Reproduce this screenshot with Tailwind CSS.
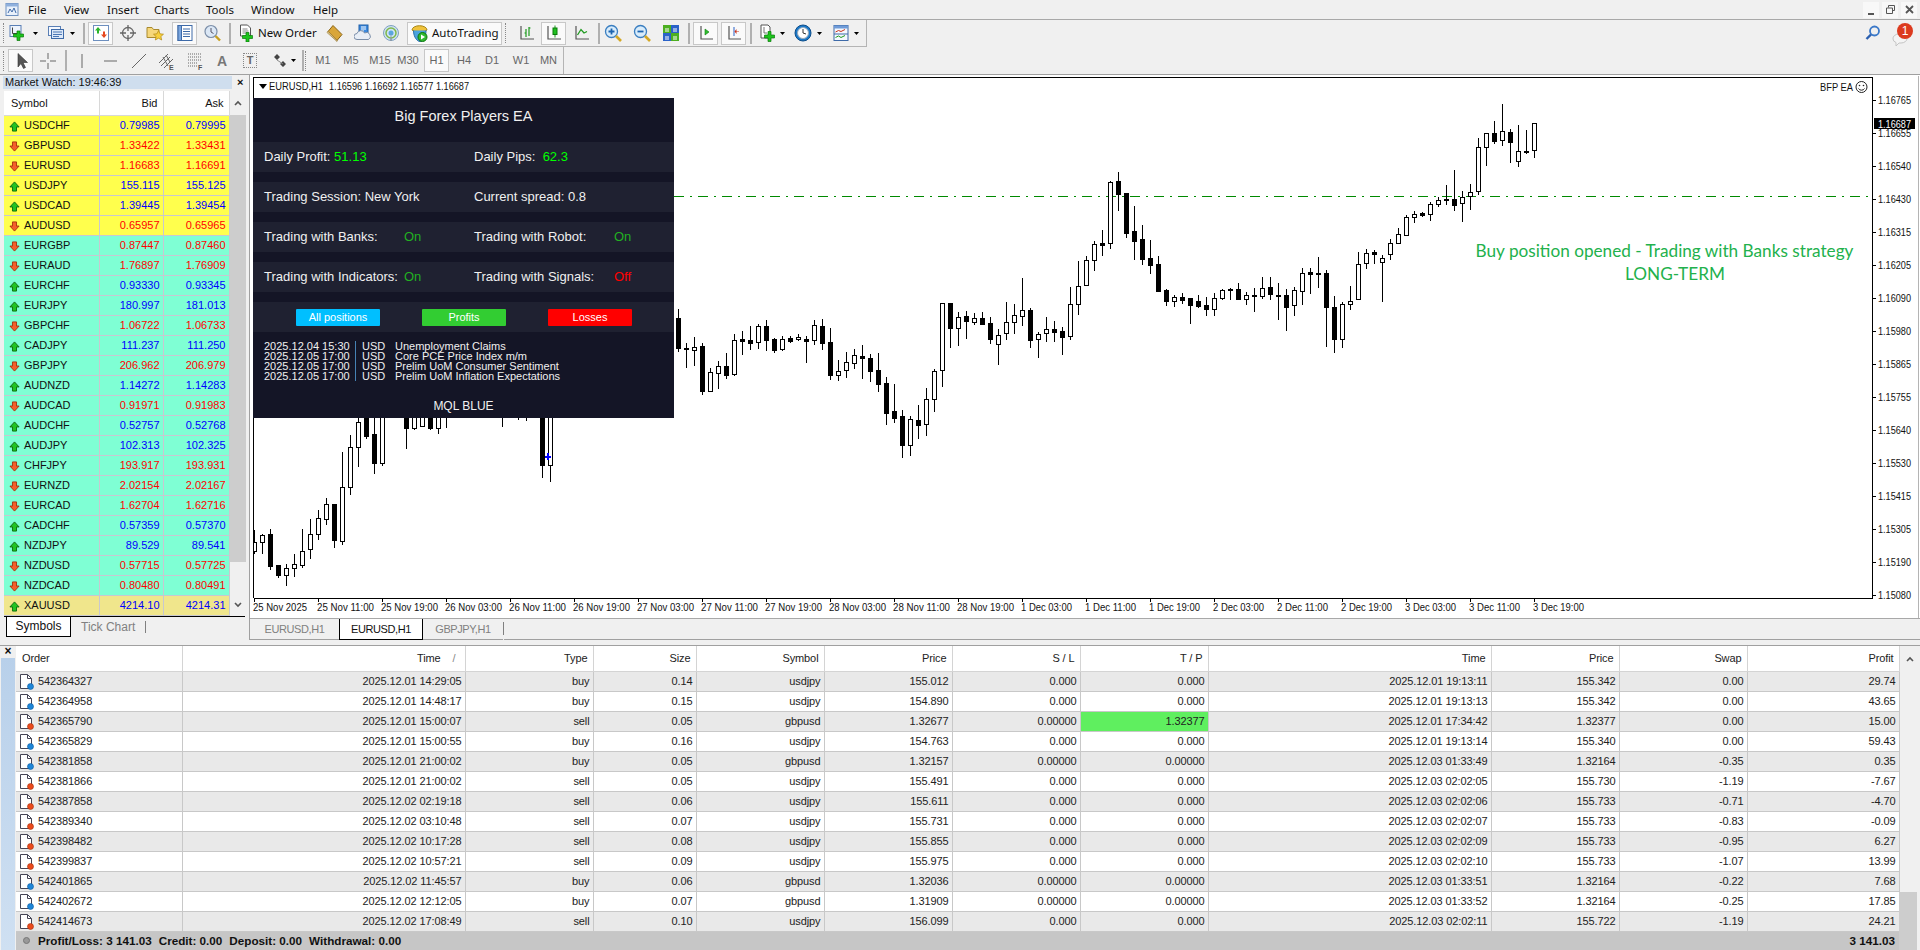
<!DOCTYPE html>
<html lang="en">
<head>
<meta charset="utf-8">
<title>MetaTrader</title>
<script src="https://cdn.jsdelivr.net/npm/@tailwindcss/browser@4"></script>
</head>
<body>
<svg class="hidden" width="0" height="0">
  <defs>
    <symbol id="dd" viewBox="0 0 5 3"><path d="M0 0h5L2.500 3z" fill="#000"/></symbol>
    <symbol id="up" viewBox="0 0 12 12"><path d="M6 1l5 5.500H8.200V11H3.800V6.500H1z" fill="#22c322" stroke="#0b6b0b"/></symbol>
    <symbol id="down" viewBox="0 0 12 12"><path d="M6 11L1 5.500h2.800V1h4.400v4.500H11z" fill="#f4602a" stroke="#a8300c"/></symbol>
    <symbol id="docb" viewBox="0 0 15 16"><path d="M1.500.5h7l4 4v10h-11z" fill="#fff" stroke="#445"/><path d="M8.500.5v4h4" fill="none" stroke="#445"/><circle cx="11.500" cy="12.500" r="3" fill="#1f86d8" stroke="#0b5aa0" stroke-width=".6"/></symbol>
    <symbol id="docr" viewBox="0 0 15 16"><path d="M1.500.5h7l4 4v10h-11z" fill="#fff" stroke="#445"/><path d="M8.500.5v4h4" fill="none" stroke="#445"/><circle cx="11.500" cy="12.500" r="3" fill="#ea4a1c" stroke="#a8300c" stroke-width=".6"/></symbol>
  </defs>
</svg>

<div class="w-[1920px] h-[950px] overflow-hidden flex flex-col bg-[#f0f0f0] text-[#111] font-['Liberation_Sans',sans-serif] text-[11px]">

  <!-- Menu -->
  <div class="h-[20px] shrink-0 flex items-center border-b border-[#a8a8a8] font-['Noto_Sans',sans-serif] text-[11.5px] relative">
    <svg class="ml-[5px] w-[15px] h-[16px]" viewBox="0 0 15 16"><rect x="1" y="1.500" width="12" height="12" fill="#e8f0fb" stroke="#6d8fbf"/><rect x="1" y="1.500" width="12" height="3" fill="#8fb0dd"/><path d="M3 11l2-4 2 3 2-4 2 5" fill="none" stroke="#3f6aa8"/></svg>
    <span class="ml-[8px] w-[36px]">File</span>
    <span class="w-[43px]">View</span>
    <span class="w-[47px]">Insert</span>
    <span class="w-[52px]">Charts</span>
    <span class="w-[45px]">Tools</span>
    <span class="w-[62px]">Window</span>
    <span>Help</span>
    <div class="ml-auto mr-[3px] flex gap-[3px]">
      <div class="w-[16px] h-[16px] bg-[#f8f8f8] flex items-end justify-center pb-[3px]"><div class="w-[6px] h-[2px] bg-[#555]"></div></div>
      <div class="w-[16px] h-[16px] bg-[#f8f8f8] flex items-center justify-center"><svg class="w-[9px] h-[9px]" viewBox="0 0 9 9"><path d="M2.500 2.500V.5h6v5h-2M.5 3h6v5.500h-6z" fill="none" stroke="#555"/></svg></div>
      <div class="w-[16px] h-[16px] bg-[#f8f8f8] flex items-center justify-center"><svg class="w-[9px] h-[9px]" viewBox="0 0 9 9"><path d="M1 1l7 7M8 1L1 8" stroke="#555" stroke-width="1.800"/></svg></div>
    </div>
  </div>

  <!-- Toolbar 1 -->
  <div class="h-[27px] shrink-0 relative">
    <div class="w-[867px] h-full flex items-center border-b border-r border-[#b4b4b4] font-['Noto_Sans',sans-serif] text-[11.5px]">
      <div class="ml-[3px] w-[2px] h-[20px] border-l border-dotted border-[#888]"></div>
      <svg class="ml-[4px] w-[18px] h-[18px]" viewBox="0 0 18 18"><rect x="1" y="1.500" width="11" height="11" fill="#eef4fc" stroke="#5a7fb5"/><path d="M3.500 3.500v6h6" fill="none" stroke="#444"/><path d="M8 7h3v3h3.500v3H11v3.500H8V13H4.500v-3H8z" fill="#1dc41d" stroke="#0a7a0a" stroke-width=".7"/></svg>
      <svg class="ml-[6px] w-[5px] h-[3px]"><use href="#dd"/></svg>
      <svg class="ml-[9px] w-[18px] h-[18px]" viewBox="0 0 18 18"><rect x="1.500" y="2.500" width="12" height="9" fill="#f4f8ff" stroke="#5a7fb5"/><rect x="4.500" y="5.500" width="12" height="9" fill="#dce8f8" stroke="#3e6aa8"/><path d="M6 8h9M6 10.500h9M6 12.500h6" stroke="#4a76b4"/></svg>
      <svg class="ml-[5px] w-[5px] h-[3px]"><use href="#dd"/></svg>
      <div class="ml-[8px] w-[2px] h-[21px] bg-[#b0b0b0]"></div>
      <div class="ml-[3px] w-[25px] h-[23px] border border-[#c8c8c8] bg-[#fafafa] flex items-center justify-center">
        <svg class="w-[18px] h-[18px]" viewBox="0 0 18 18"><rect x="1.500" y="1.500" width="15" height="15" fill="#fff" stroke="#6d8fbf"/><path d="M6 3l3 3.500H7v3H5v-3H3z" fill="#2ab52a"/><path d="M12 14l-3-3.500h2v-3h2v3h2z" fill="#e5481f"/></svg>
      </div>
      <svg class="ml-[6px] w-[18px] h-[18px]" viewBox="0 0 18 18"><circle cx="9" cy="9" r="5.500" fill="none" stroke="#666" stroke-width="1.300"/><path d="M9 1v6M9 11v6M1 9h6M11 9h6" stroke="#666" stroke-width="1.300"/></svg>
      <svg class="ml-[9px] w-[18px] h-[18px]" viewBox="0 0 18 18"><path d="M1 3.500h5l1.500 2H13v8H1z" fill="#f6d77a" stroke="#a98a2e"/><path d="M12.500 6.500l1.500 3.300 3.500.4-2.600 2.300.8 3.500-3.200-1.800-3.200 1.800.8-3.500-2.600-2.300 3.500-.4z" fill="#f7cf3d" stroke="#b28a14" stroke-width=".7"/></svg>
      <div class="ml-[8px] w-[25px] h-[23px] border border-[#c8c8c8] bg-[#fafafa] flex items-center justify-center">
        <svg class="w-[18px] h-[18px]" viewBox="0 0 18 18"><rect x="2" y="1.500" width="14" height="15" fill="#fff" stroke="#3e6aa8"/><rect x="2" y="1.500" width="3.500" height="15" fill="#7ba6de" stroke="#3e6aa8"/><path d="M7 5h7M7 7.500h7M7 10h7M7 12.500h7" stroke="#3e6aa8"/></svg>
      </div>
      <svg class="ml-[6px] w-[18px] h-[18px]" viewBox="0 0 18 18"><circle cx="8" cy="7.500" r="6" fill="#dbe7f5" stroke="#7b8ea8" stroke-width="1.200"/><path d="M8 4v4l2.500 1.500" fill="none" stroke="#556"/><path d="M12.500 12l4.500 4.500" stroke="#c8a020" stroke-width="2.400"/></svg>
      <div class="ml-[8px] w-[2px] h-[21px] bg-[#b0b0b0]"></div>
      <svg class="ml-[7px] w-[18px] h-[18px]" viewBox="0 0 18 18"><path d="M2.500 1h7l3 3v8h-10z" fill="#fff" stroke="#555"/><path d="M4.500 5h5M4.500 7h6M4.500 9h6" stroke="#888"/><path d="M8 8.500h3v3h3.500v3H11V18H8v-3.500H4.500v-3H8z" fill="#1dc41d" stroke="#0a7a0a" stroke-width=".7"/></svg>
      <span class="ml-[2px] w-[57px] whitespace-nowrap leading-none">New Order</span>
      <svg class="ml-[11px] w-[18px] h-[18px]" viewBox="0 0 18 18"><path d="M7 1.500l9 9-5 6-9-9z" fill="#d9a63a" stroke="#8a6515"/><path d="M2 7.500l9 9 0 1-10-9z" fill="#f2e2b0" stroke="#8a6515" stroke-width=".6"/></svg>
      <svg class="ml-[10px] w-[18px] h-[18px]" viewBox="0 0 18 18"><rect x="5" y="1" width="9" height="9" fill="#3d8be0" stroke="#1c5ea8"/><path d="M7 3h5M7 5h5M7 7h3" stroke="#fff"/><path d="M3 15.500a3 3 0 010-6 4 4 0 017.500-.5 3.500 3.500 0 014 6.500z" fill="#e8eef6" stroke="#7b8ea8"/></svg>
      <svg class="ml-[10px] w-[18px] h-[18px]" viewBox="0 0 18 18"><circle cx="9" cy="9" r="7.500" fill="#cfe3f4" stroke="#7fa0bf"/><circle cx="9" cy="9" r="5" fill="none" stroke="#7fb84a" stroke-width="1.500"/><circle cx="9" cy="9" r="2.500" fill="#58a6e0"/><path d="M9 9l-1 8h2z" fill="#8a9aaa"/></svg>
      <div class="ml-[7px] w-[95px] h-[23px] border border-[#c8c8c8] bg-[#fafafa] flex items-center">
        <svg class="ml-[2px] w-[19px] h-[19px]" viewBox="0 0 19 19"><path d="M2 6a7 4 0 0115 0c-1 2-14 2-15 0z" fill="#f0c33c" stroke="#a68414"/><path d="M3.500 6.500c0 7 4 11 6.500 11 3 0 6-4 6-11" fill="#4aa3dd" stroke="#2a6fa8"/><circle cx="12.500" cy="13" r="4.500" fill="#30b830" stroke="#0c760c"/><path d="M11 10.500l4 2.500-4 2.500z" fill="#fff"/></svg>
        <span class="ml-[3px] whitespace-nowrap leading-none">AutoTrading</span>
      </div>
      <div class="ml-[3px] w-[2px] h-[20px] border-l border-dotted border-[#888]"></div>
      <svg class="ml-[11px] w-[18px] h-[18px]" viewBox="0 0 18 18"><path d="M3 2v13h13" fill="none" stroke="#555" stroke-width="1.200"/><path d="M8 5v8M6.500 9H8M11 3v9M11 4h1.500" stroke="#1f9a1f" stroke-width="1.200"/></svg>
      <div class="ml-[5px] w-[25px] h-[23px] border border-[#c8c8c8] bg-[#fafafa] flex items-center justify-center">
        <svg class="w-[18px] h-[18px]" viewBox="0 0 18 18"><path d="M3 2v13h13" fill="none" stroke="#555" stroke-width="1.200"/><path d="M10 1.500v12" stroke="#1f9a1f"/><rect x="8" y="4" width="4" height="6.500" fill="#1fc01f" stroke="#0a7a0a"/></svg>
      </div>
      <svg class="ml-[7px] w-[18px] h-[18px]" viewBox="0 0 18 18"><path d="M3 2v13h13" fill="none" stroke="#555" stroke-width="1.200"/><path d="M4.500 11L8 5.500 11 9l3-1.500" fill="none" stroke="#1f9a1f" stroke-width="1.300"/></svg>
      <div class="ml-[7px] w-[2px] h-[21px] bg-[#b0b0b0]"></div>
      <svg class="ml-[4px] w-[18px] h-[18px]" viewBox="0 0 18 18"><circle cx="7.500" cy="7.500" r="6" fill="#d8ecfb" stroke="#3a7ec0" stroke-width="1.300"/><path d="M4.500 7.500h6M7.500 4.500v6" stroke="#1c64b0" stroke-width="1.800"/><path d="M12 12l5 5" stroke="#d4a824" stroke-width="2.600"/></svg>
      <svg class="ml-[11px] w-[18px] h-[18px]" viewBox="0 0 18 18"><circle cx="7.500" cy="7.500" r="6" fill="#d8ecfb" stroke="#3a7ec0" stroke-width="1.300"/><path d="M4.500 7.500h6" stroke="#1c64b0" stroke-width="1.800"/><path d="M12 12l5 5" stroke="#d4a824" stroke-width="2.600"/></svg>
      <svg class="ml-[11px] w-[18px] h-[18px]" viewBox="0 0 18 18"><rect x="1" y="1" width="8" height="8" fill="#4caf20"/><rect x="9" y="1" width="8" height="8" fill="#2a62c8"/><rect x="1" y="9" width="8" height="8" fill="#2a62c8"/><rect x="9" y="9" width="8" height="8" fill="#4caf20"/><path d="M3 5h4M3 7h4M11 5h4M11 7h4M3 13h4M3 15h4M11 13h4M11 15h4" stroke="#fff"/></svg>
      <div class="ml-[8px] w-[2px] h-[21px] bg-[#b0b0b0]"></div>
      <div class="ml-[3px] w-[25px] h-[23px] border border-[#c8c8c8] bg-[#fafafa] flex items-center justify-center">
        <svg class="w-[18px] h-[18px]" viewBox="0 0 18 18"><path d="M4 2v13h12" fill="none" stroke="#555" stroke-width="1.200"/><path d="M8 5v6l4-3z" fill="#2fc02f" stroke="#0a7a0a" stroke-width=".6"/></svg>
      </div>
      <div class="ml-[3px] w-[25px] h-[23px] border border-[#c8c8c8] bg-[#fafafa] flex items-center justify-center">
        <svg class="w-[18px] h-[18px]" viewBox="0 0 18 18"><path d="M4 2v13h12" fill="none" stroke="#555" stroke-width="1.200"/><path d="M9 3v9" stroke="#2a62c8"/><path d="M14 7.500h-2.500V5L9.500 7.500l2 2.500V8H14z" fill="#c8321c"/></svg>
      </div>
      <div class="ml-[4px] w-[2px] h-[21px] bg-[#b0b0b0]"></div>
      <svg class="ml-[7px] w-[18px] h-[18px]" viewBox="0 0 18 18"><path d="M2 1h7l2 2v11H2z" fill="#fff" stroke="#555"/><path d="M5 3v6h3" fill="none" stroke="#777"/><path d="M9 7.500h3v3.500h3.500v3H12v3.500H9V14H5.500v-3H9z" fill="#1dc41d" stroke="#0a7a0a" stroke-width=".7"/></svg>
      <svg class="ml-[3px] w-[5px] h-[3px]"><use href="#dd"/></svg>
      <svg class="ml-[9px] w-[18px] h-[18px]" viewBox="0 0 18 18"><circle cx="9" cy="9" r="8" fill="#1c79c8" stroke="#0c4d8a"/><circle cx="9" cy="9" r="5.500" fill="#fff" stroke="#9ab"/><path d="M9 5v4l3 1" fill="none" stroke="#333"/></svg>
      <svg class="ml-[5px] w-[5px] h-[3px]"><use href="#dd"/></svg>
      <svg class="ml-[10px] w-[18px] h-[18px]" viewBox="0 0 18 18"><rect x="2" y="1.500" width="14" height="15" fill="#f4f8ff" stroke="#3e6aa8"/><rect x="2" y="1.500" width="14" height="3" fill="#6f9bd8"/><path d="M2 10h14" stroke="#3e6aa8"/><path d="M3.500 8l3-1.500 2.500 1 4-2" fill="none" stroke="#c8321c"/><path d="M3.500 13.500l3-1.500 2.500 1.500 4-2" fill="none" stroke="#1f9a1f"/></svg>
      <svg class="ml-[4px] w-[5px] h-[3px]"><use href="#dd"/></svg>
    </div>
    <svg class="absolute left-[1865px] top-[4px] w-[16px] h-[18px]" viewBox="0 0 16 18"><circle cx="9.500" cy="7" r="4.500" fill="none" stroke="#3a78c8" stroke-width="1.800"/><path d="M6 10.500l-4.500 4.500" stroke="#2a5fb0" stroke-width="2.400"/></svg>
    <div class="absolute left-[1891px] top-[4px] w-[24px] h-[24px]">
      <svg class="w-[24px] h-[24px]" viewBox="0 0 24 24"><path d="M2 15a6 4.500 0 016-5h2a6 4.500 0 010 9H8l-3 3v-3.500A5 4 0 012 15z" fill="#f4f4f4" stroke="#c4c4c4"/></svg>
      <div class="absolute left-[6px] top-[-1px] w-[16px] h-[16px] rounded-full bg-[#dc3a1e] text-white text-[12px] leading-[16px] text-center">1</div>
    </div>
  </div>

  <!-- Toolbar 2 -->
  <div class="h-[27px] shrink-0">
    <div class="w-[564px] h-full flex items-center border-r border-[#b4b4b4] text-[#666]">
      <div class="ml-[3px] w-[2px] h-[20px] border-l border-dotted border-[#888]"></div>
      <div class="ml-[3px] w-[25px] h-[23px] border border-[#c8c8c8] bg-[#fafafa] flex items-center justify-center">
        <svg class="w-[18px] h-[18px]" viewBox="0 0 18 18"><path d="M6 1.500V15l3-3.500 2.500 5 2-1-2.500-5h4.500z" fill="#555" stroke="#333" stroke-width=".6"/></svg>
      </div>
      <svg class="ml-[6px] w-[18px] h-[18px]" viewBox="0 0 18 18"><path d="M9 1v6M9 11v6M1 9h6M11 9h6" stroke="#666"/></svg>
      <div class="ml-[8px] w-[2px] h-[21px] bg-[#b0b0b0]"></div>
      <svg class="ml-[6px] w-[18px] h-[18px]" viewBox="0 0 18 18"><path d="M9 2v14" stroke="#666"/></svg>
      <svg class="ml-[11px] w-[18px] h-[18px]" viewBox="0 0 18 18"><path d="M2 9h13" stroke="#666"/></svg>
      <svg class="ml-[10px] w-[18px] h-[18px]" viewBox="0 0 18 18"><path d="M2 16L16 2" stroke="#666"/></svg>
      <svg class="ml-[10px] w-[18px] h-[18px]" viewBox="0 0 18 18"><path d="M1 11l9-9M3 14l9-9M6 16l9-9M5 5l5 9M8 3l4 7" stroke="#666"/><text x="11" y="18" font-size="7" font-weight="700" fill="#555">E</text></svg>
      <svg class="ml-[11px] w-[18px] h-[18px]" viewBox="0 0 18 18"><path d="M1 2h13M1 5h13M1 8h13M1 11h9M1 14h9" stroke="#666" stroke-dasharray="1 1"/><text x="11" y="18" font-size="7" font-weight="700" fill="#555">F</text></svg>
      <span class="ml-[8px] w-[18px] text-center text-[14px] font-bold leading-none text-[#777]">A</span>
      <div class="ml-[12px] w-[14px] h-[15px] border border-dotted border-[#888] flex items-center justify-center text-[11px] font-bold leading-none text-[#666]">T</div>
      <svg class="ml-[14px] w-[18px] h-[18px]" viewBox="0 0 18 18"><path d="M3 5l3-3 3 3-3 3zM9 12l3-3 3 3-3 3z" fill="#444"/><path d="M6 8l6 4" stroke="#888"/></svg>
      <svg class="ml-[2px] w-[5px] h-[3px]"><use href="#dd"/></svg>
      <div class="ml-[6px] w-[2px] h-[21px] bg-[#b0b0b0]"></div>
      <div class="ml-[1px] w-[2px] h-[20px] border-l border-dotted border-[#888]"></div>
      <span class="ml-[2px] w-[28px] text-center">M1</span>
      <span class="w-[28px] text-center">M5</span>
      <span class="ml-[1px] w-[28px] text-center">M15</span>
      <span class="w-[28px] text-center">M30</span>
      <div class="ml-[2px] w-[25px] h-[23px] border border-[#c8c8c8] bg-[#fafafa] flex items-center justify-center">H1</div>
      <span class="ml-[1px] w-[28px] text-center">H4</span>
      <span class="w-[28px] text-center">D1</span>
      <span class="ml-[1px] w-[28px] text-center">W1</span>
      <span class="w-[27px] text-center">MN</span>
    </div>
  </div>

  <!-- Main -->
  <div class="h-[566px] shrink-0 flex border-t border-[#a0a0a0]">
    <!-- Market Watch -->
    <div class="w-[250px] shrink-0 border-r border-[#a0a0a0] pt-[1px] pl-[3px] flex flex-col">
      <div class="flex items-center h-[13px]">
        <div class="w-[229px] h-[13px] bg-[#cfdeee] pl-[2px] leading-[13px] text-[11px]">Market Watch: 19:46:39</div>
        <span class="ml-[5px] font-bold text-[11px] leading-none">×</span>
      </div>
      <div class="mt-[2px] ml-[1px] flex">
        <table class="w-[225px] table-fixed bg-white [&_th]:font-normal [&_th]:h-[24px] [&_th]:border-r [&_th]:border-b [&_th]:border-[#d8d8d8] [&_th]:text-right [&_th]:pr-[5px] [&_th:first-child]:text-left [&_th:first-child]:pl-[7px] [&_td]:h-[20px] [&_td]:p-0 [&_td]:pr-[3px] [&_td]:border-r [&_td]:border-b [&_td]:border-[#c8c8d0] [&_td]:text-right [&_td:first-child]:text-left [&_td:first-child]:pl-[20px] [&_td:first-child]:relative [&_td:first-child]:text-[#111]">
          <colgroup><col class="w-[95px]"><col class="w-[64px]"><col class="w-[66px]"></colgroup>
          <thead><tr><th>Symbol</th><th>Bid</th><th>Ask</th></tr></thead>
          <tbody>
            <tr class="bg-[#ffff4d] text-[#0000ff]"><td><svg class="absolute left-[5px] top-[5px] w-[11px] h-[11px]"><use href="#up"/></svg>USDCHF</td><td>0.79985</td><td>0.79995</td></tr>
            <tr class="bg-[#ffff4d] text-[#ff0000]"><td><svg class="absolute left-[5px] top-[5px] w-[11px] h-[11px]"><use href="#down"/></svg>GBPUSD</td><td>1.33422</td><td>1.33431</td></tr>
            <tr class="bg-[#ffff4d] text-[#ff0000]"><td><svg class="absolute left-[5px] top-[5px] w-[11px] h-[11px]"><use href="#down"/></svg>EURUSD</td><td>1.16683</td><td>1.16691</td></tr>
            <tr class="bg-[#ffff4d] text-[#0000ff]"><td><svg class="absolute left-[5px] top-[5px] w-[11px] h-[11px]"><use href="#up"/></svg>USDJPY</td><td>155.115</td><td>155.125</td></tr>
            <tr class="bg-[#ffff4d] text-[#0000ff]"><td><svg class="absolute left-[5px] top-[5px] w-[11px] h-[11px]"><use href="#up"/></svg>USDCAD</td><td>1.39445</td><td>1.39454</td></tr>
            <tr class="bg-[#ffff4d] text-[#ff0000]"><td><svg class="absolute left-[5px] top-[5px] w-[11px] h-[11px]"><use href="#down"/></svg>AUDUSD</td><td>0.65957</td><td>0.65965</td></tr>
            <tr class="bg-[#7fffd4] text-[#ff0000]"><td><svg class="absolute left-[5px] top-[5px] w-[11px] h-[11px]"><use href="#down"/></svg>EURGBP</td><td>0.87447</td><td>0.87460</td></tr>
            <tr class="bg-[#7fffd4] text-[#ff0000]"><td><svg class="absolute left-[5px] top-[5px] w-[11px] h-[11px]"><use href="#down"/></svg>EURAUD</td><td>1.76897</td><td>1.76909</td></tr>
            <tr class="bg-[#7fffd4] text-[#0000ff]"><td><svg class="absolute left-[5px] top-[5px] w-[11px] h-[11px]"><use href="#up"/></svg>EURCHF</td><td>0.93330</td><td>0.93345</td></tr>
            <tr class="bg-[#7fffd4] text-[#0000ff]"><td><svg class="absolute left-[5px] top-[5px] w-[11px] h-[11px]"><use href="#up"/></svg>EURJPY</td><td>180.997</td><td>181.013</td></tr>
            <tr class="bg-[#7fffd4] text-[#ff0000]"><td><svg class="absolute left-[5px] top-[5px] w-[11px] h-[11px]"><use href="#down"/></svg>GBPCHF</td><td>1.06722</td><td>1.06733</td></tr>
            <tr class="bg-[#7fffd4] text-[#0000ff]"><td><svg class="absolute left-[5px] top-[5px] w-[11px] h-[11px]"><use href="#up"/></svg>CADJPY</td><td>111.237</td><td>111.250</td></tr>
            <tr class="bg-[#7fffd4] text-[#ff0000]"><td><svg class="absolute left-[5px] top-[5px] w-[11px] h-[11px]"><use href="#down"/></svg>GBPJPY</td><td>206.962</td><td>206.979</td></tr>
            <tr class="bg-[#7fffd4] text-[#0000ff]"><td><svg class="absolute left-[5px] top-[5px] w-[11px] h-[11px]"><use href="#up"/></svg>AUDNZD</td><td>1.14272</td><td>1.14283</td></tr>
            <tr class="bg-[#7fffd4] text-[#ff0000]"><td><svg class="absolute left-[5px] top-[5px] w-[11px] h-[11px]"><use href="#down"/></svg>AUDCAD</td><td>0.91971</td><td>0.91983</td></tr>
            <tr class="bg-[#7fffd4] text-[#0000ff]"><td><svg class="absolute left-[5px] top-[5px] w-[11px] h-[11px]"><use href="#up"/></svg>AUDCHF</td><td>0.52757</td><td>0.52768</td></tr>
            <tr class="bg-[#7fffd4] text-[#0000ff]"><td><svg class="absolute left-[5px] top-[5px] w-[11px] h-[11px]"><use href="#up"/></svg>AUDJPY</td><td>102.313</td><td>102.325</td></tr>
            <tr class="bg-[#7fffd4] text-[#ff0000]"><td><svg class="absolute left-[5px] top-[5px] w-[11px] h-[11px]"><use href="#down"/></svg>CHFJPY</td><td>193.917</td><td>193.931</td></tr>
            <tr class="bg-[#7fffd4] text-[#ff0000]"><td><svg class="absolute left-[5px] top-[5px] w-[11px] h-[11px]"><use href="#down"/></svg>EURNZD</td><td>2.02154</td><td>2.02167</td></tr>
            <tr class="bg-[#7fffd4] text-[#ff0000]"><td><svg class="absolute left-[5px] top-[5px] w-[11px] h-[11px]"><use href="#down"/></svg>EURCAD</td><td>1.62704</td><td>1.62716</td></tr>
            <tr class="bg-[#7fffd4] text-[#0000ff]"><td><svg class="absolute left-[5px] top-[5px] w-[11px] h-[11px]"><use href="#up"/></svg>CADCHF</td><td>0.57359</td><td>0.57370</td></tr>
            <tr class="bg-[#7fffd4] text-[#0000ff]"><td><svg class="absolute left-[5px] top-[5px] w-[11px] h-[11px]"><use href="#up"/></svg>NZDJPY</td><td>89.529</td><td>89.541</td></tr>
            <tr class="bg-[#7fffd4] text-[#ff0000]"><td><svg class="absolute left-[5px] top-[5px] w-[11px] h-[11px]"><use href="#down"/></svg>NZDUSD</td><td>0.57715</td><td>0.57725</td></tr>
            <tr class="bg-[#7fffd4] text-[#ff0000]"><td><svg class="absolute left-[5px] top-[5px] w-[11px] h-[11px]"><use href="#down"/></svg>NZDCAD</td><td>0.80480</td><td>0.80491</td></tr>
            <tr class="bg-[#f0e68c] text-[#0000ff]"><td><svg class="absolute left-[5px] top-[5px] w-[11px] h-[11px]"><use href="#up"/></svg>XAUUSD</td><td>4214.10</td><td>4214.31</td></tr>
          </tbody>
        </table>
        <div class="w-[16px] h-[524px] flex flex-col bg-[#f0f0f0]">
          <div class="h-[24px] flex items-center justify-center"><svg class="w-[8px] h-[6px]" viewBox="0 0 8 6"><path d="M1 5l3-3 3 3" fill="none" stroke="#555" stroke-width="1.600"/></svg></div>
          <div class="h-[447px] bg-[#cdcdcd]"></div>
          <div class="mt-auto h-[20px] flex items-center justify-center"><svg class="w-[8px] h-[6px]" viewBox="0 0 8 6"><path d="M1 1l3 3 3-3" fill="none" stroke="#555" stroke-width="1.600"/></svg></div>
        </div>
      </div>
      <div class="ml-[1px] w-[241px] border-t border-black flex h-[20px]">
        <div class="ml-[2px] w-[65px] h-[20px] bg-white border-l border-r border-b border-black text-[12px] flex items-center justify-center">Symbols</div>
        <span class="ml-[10px] text-[12px] text-[#808080] leading-[20px]">Tick Chart</span>
        <div class="ml-[10px] mt-[4px] w-px h-[12px] bg-[#808080]"></div>
      </div>
    </div>

    <!-- Chart column -->
    <div class="relative flex-1 flex flex-col bg-white">
      <svg id="chart" class="ml-[3px] mt-[1px] w-[1667px] h-[542px] block shrink-0" viewBox="253 76 1667 542" shape-rendering="crispEdges" font-family="Liberation Sans, sans-serif" font-size="11" fill="#111">
        <path d="M674 196.500H1873" stroke="#008a00" stroke-width="1" fill="none" stroke-dasharray="10 6 2 6"/>
        <path id="wicks" stroke="#000" fill="none"/>
        <path id="hollow" stroke="#000" fill="#fff"/>
        <path id="solid" stroke="#000" fill="#000"/>
        <path d="M253.500 598V77.500H1872.500V598.500H253.500" fill="none" stroke="#000"/>
        <path d="M1918.500 76V618" stroke="#b4b4b4"/>
        <path d="M1873 100.500h3M1873 133.500h3M1873 166.500h3M1873 199.500h3M1873 232.500h3M1873 265.500h3M1873 298.500h3M1873 331.500h3M1873 364.500h3M1873 397.500h3M1873 430.500h3M1873 463.500h3M1873 496.500h3M1873 529.500h3M1873 562.500h3M1873 595.500h3" stroke="#000"/>
        <path d="M254.500 599v3M318.500 599v3M382.500 599v3M446.500 599v3M510.500 599v3M574.500 599v3M638.500 599v3M702.500 599v3M766.500 599v3M830.500 599v3M894.500 599v3M958.500 599v3M1022.500 599v3M1086.500 599v3M1150.500 599v3M1214.500 599v3M1278.500 599v3M1342.500 599v3M1406.500 599v3M1470.500 599v3M1534.500 599v3" stroke="#000"/>
        <g shape-rendering="auto">
          <path d="M259 84h8l-4 5z" fill="#000"/>
          <text x="269" y="89.500" textLength="54" lengthAdjust="spacingAndGlyphs">EURUSD,H1</text>
          <text x="329" y="89.500" textLength="140" lengthAdjust="spacingAndGlyphs">1.16596 1.16692 1.16577 1.16687</text>
          <text x="1820" y="91" textLength="33" lengthAdjust="spacingAndGlyphs">BFP EA</text>
          <circle cx="1861.500" cy="87" r="5.500" fill="none" stroke="#222"/>
          <path d="M1858.500 88.500a3.500 3.500 0 006 0" fill="none" stroke="#222"/>
          <circle cx="1859.500" cy="85.500" r=".8" fill="#222"/><circle cx="1863.500" cy="85.500" r=".8" fill="#222"/>
          <text x="1878" y="104" textLength="33" lengthAdjust="spacingAndGlyphs">1.16765</text>
          <text x="1878" y="137" textLength="33" lengthAdjust="spacingAndGlyphs">1.16655</text>
          <text x="1878" y="170" textLength="33" lengthAdjust="spacingAndGlyphs">1.16540</text>
          <text x="1878" y="203" textLength="33" lengthAdjust="spacingAndGlyphs">1.16430</text>
          <text x="1878" y="236" textLength="33" lengthAdjust="spacingAndGlyphs">1.16315</text>
          <text x="1878" y="269" textLength="33" lengthAdjust="spacingAndGlyphs">1.16205</text>
          <text x="1878" y="302" textLength="33" lengthAdjust="spacingAndGlyphs">1.16090</text>
          <text x="1878" y="335" textLength="33" lengthAdjust="spacingAndGlyphs">1.15980</text>
          <text x="1878" y="368" textLength="33" lengthAdjust="spacingAndGlyphs">1.15865</text>
          <text x="1878" y="401" textLength="33" lengthAdjust="spacingAndGlyphs">1.15755</text>
          <text x="1878" y="434" textLength="33" lengthAdjust="spacingAndGlyphs">1.15640</text>
          <text x="1878" y="467" textLength="33" lengthAdjust="spacingAndGlyphs">1.15530</text>
          <text x="1878" y="500" textLength="33" lengthAdjust="spacingAndGlyphs">1.15415</text>
          <text x="1878" y="533" textLength="33" lengthAdjust="spacingAndGlyphs">1.15305</text>
          <text x="1878" y="566" textLength="33" lengthAdjust="spacingAndGlyphs">1.15190</text>
          <text x="1878" y="599" textLength="33" lengthAdjust="spacingAndGlyphs">1.15080</text>
          <rect x="1874" y="118" width="41" height="11" fill="#000"/>
          <text x="1878" y="127.500" fill="#fff" textLength="33" lengthAdjust="spacingAndGlyphs">1.16687</text>
          <text x="253" y="611" textLength="54" lengthAdjust="spacingAndGlyphs">25 Nov 2025</text>
          <text x="317" y="611" textLength="57" lengthAdjust="spacingAndGlyphs">25 Nov 11:00</text>
          <text x="381" y="611" textLength="57" lengthAdjust="spacingAndGlyphs">25 Nov 19:00</text>
          <text x="445" y="611" textLength="57" lengthAdjust="spacingAndGlyphs">26 Nov 03:00</text>
          <text x="509" y="611" textLength="57" lengthAdjust="spacingAndGlyphs">26 Nov 11:00</text>
          <text x="573" y="611" textLength="57" lengthAdjust="spacingAndGlyphs">26 Nov 19:00</text>
          <text x="637" y="611" textLength="57" lengthAdjust="spacingAndGlyphs">27 Nov 03:00</text>
          <text x="701" y="611" textLength="57" lengthAdjust="spacingAndGlyphs">27 Nov 11:00</text>
          <text x="765" y="611" textLength="57" lengthAdjust="spacingAndGlyphs">27 Nov 19:00</text>
          <text x="829" y="611" textLength="57" lengthAdjust="spacingAndGlyphs">28 Nov 03:00</text>
          <text x="893" y="611" textLength="57" lengthAdjust="spacingAndGlyphs">28 Nov 11:00</text>
          <text x="957" y="611" textLength="57" lengthAdjust="spacingAndGlyphs">28 Nov 19:00</text>
          <text x="1021" y="611" textLength="51" lengthAdjust="spacingAndGlyphs">1 Dec 03:00</text>
          <text x="1085" y="611" textLength="51" lengthAdjust="spacingAndGlyphs">1 Dec 11:00</text>
          <text x="1149" y="611" textLength="51" lengthAdjust="spacingAndGlyphs">1 Dec 19:00</text>
          <text x="1213" y="611" textLength="51" lengthAdjust="spacingAndGlyphs">2 Dec 03:00</text>
          <text x="1277" y="611" textLength="51" lengthAdjust="spacingAndGlyphs">2 Dec 11:00</text>
          <text x="1341" y="611" textLength="51" lengthAdjust="spacingAndGlyphs">2 Dec 19:00</text>
          <text x="1405" y="611" textLength="51" lengthAdjust="spacingAndGlyphs">3 Dec 03:00</text>
          <text x="1469" y="611" textLength="51" lengthAdjust="spacingAndGlyphs">3 Dec 11:00</text>
          <text x="1533" y="611" textLength="51" lengthAdjust="spacingAndGlyphs">3 Dec 19:00</text>
          <text x="1664.500" y="256.500" text-anchor="middle" font-family="Lato, sans-serif" font-size="17.2" fill="#22b14c">Buy position opened - Trading with Banks strategy</text>
          <text x="1675" y="280" text-anchor="middle" font-family="Lato, sans-serif" font-size="17.2" fill="#22b14c">LONG-TERM</text>
        </g>
        <path d="M545 456.500h6M548 453v7" stroke="#0000ff" stroke-width="2"/>
      </svg>

      <!-- EA panel -->
      <div class="absolute left-[3px] top-[23px] w-[421px] h-[320px] bg-[#141526] text-[#f0f0f0] text-[13px] flex flex-col">
        <div class="h-[44px] pb-[6px] flex items-center justify-center text-[14.5px]">Big Forex Players EA</div>
        <div class="h-[30px] bg-[#1f2131] flex items-center">
          <div class="w-[221px] pl-[11px]">Daily Profit: <span class="text-[#00ff00]">51.13</span></div>
          <div>Daily Pips: &nbsp;<span class="text-[#00ff00]">62.3</span></div>
        </div>
        <div class="mt-[10px] h-[30px] bg-[#1f2131] flex items-center">
          <div class="w-[221px] pl-[11px]">Trading Session: New York</div>
          <div>Current spread: 0.8</div>
        </div>
        <div class="mt-[10px] h-[30px] bg-[#1f2131] flex items-center">
          <div class="w-[151px] pl-[11px]">Trading with Banks:</div>
          <div class="w-[70px] text-[#22b022]">On</div>
          <div class="w-[140px]">Trading with Robot:</div>
          <div class="text-[#22b022]">On</div>
        </div>
        <div class="mt-[10px] h-[30px] bg-[#1f2131] flex items-center">
          <div class="w-[151px] pl-[11px]">Trading with Indicators:</div>
          <div class="w-[70px] text-[#22b022]">On</div>
          <div class="w-[140px]">Trading with Signals:</div>
          <div class="text-[#ff0000]">Off</div>
        </div>
        <div class="mt-[10px] h-[30px] bg-[#1f2131] flex items-center text-[11px] text-white">
          <div class="ml-[43px] w-[84px] h-[17px] bg-[#00bfff] rounded-[1px] text-center leading-[17px]">All positions</div>
          <div class="ml-[42px] w-[84px] h-[17px] bg-[#32cd32] rounded-[1px] text-center leading-[17px]">Profits</div>
          <div class="ml-[42px] w-[84px] h-[17px] bg-[#ff0000] rounded-[1px] text-center leading-[17px]">Losses</div>
        </div>
        <div class="pt-[9px] pl-[11px] flex text-[11px] leading-[10px] h-[67px]">
          <div class="w-[98px] relative">2025.12.04 15:30<br>2025.12.05 17:00<br>2025.12.05 17:00<br>2025.12.05 17:00<div class="absolute left-[91px] top-[0px] w-px h-[40px] bg-[#4682b4]"></div></div>
          <div class="w-[33px]">USD<br>USD<br>USD<br>USD</div>
          <div>Unemployment Claims<br>Core PCE Price Index m/m<br>Prelim UoM Consumer Sentiment<br>Prelim UoM Inflation Expectations</div>
        </div>
        <div class="text-center text-[12px] leading-[14px]">MQL BLUE</div>
      </div>

      <!-- Chart tabs -->
      <div class="h-[22px] shrink-0 bg-[#f0f0f0] border-t border-[#a8a8a8] flex text-[11px] tracking-[-0.4px] text-[#808080] leading-[20px] relative">
        <div class="w-[89px] text-center border-b border-[#a0a0a0]">EURUSD,H1</div>
        <div class="w-[84px] h-[21px] bg-white text-center text-[#111] border-l border-r border-b border-black">EURUSD,H1</div>
        <div class="w-[80px] text-center border-b border-[#a0a0a0]">GBPJPY,H1</div>
        <div class="mt-[3px] w-px h-[13px] bg-[#808080]"></div>
        <div class="flex-1 border-b border-[#a0a0a0]"></div>
      </div>
    </div>
  </div>

  <!-- Terminal -->
  <div class="flex-1 min-h-0 flex pt-[5px]">
    <div class="w-[16px] shrink-0 border-t border-[#a0a0a0] flex flex-col">
      <div class="h-[12px] text-center font-bold text-[12px] leading-[11px]">×</div>
      <div class="flex-1 ml-[1px] w-[14px] bg-gradient-to-b from-[#b8d0ea] to-[#cfe0f2]"></div>
    </div>
    <div class="w-[1883px] shrink-0 border-t border-[#a0a0a0] flex flex-col">
      <table class="w-[1883px] table-fixed tracking-[-0.1px] [&_th]:font-normal [&_th]:h-[25px] [&_th]:border-r [&_th]:border-b [&_th]:border-[#d4d4d4] [&_th]:text-right [&_th]:pr-[5px] [&_th:first-child]:text-left [&_th:first-child]:pl-[6px] [&_td]:h-[20px] [&_td]:p-0 [&_td]:pr-[3px] [&_td]:border-r [&_td]:border-b [&_td]:border-[#c8c8c8] [&_td]:text-right [&_td:first-child]:text-left [&_td:first-child]:pl-[22px] [&_td:first-child]:relative [&_tbody_tr:nth-child(odd)]:bg-[#e9e9e9] bg-white text-[#222]">
        <colgroup><col class="w-[166px]"><col class="w-[283px]"><col class="w-[128px]"><col class="w-[103px]"><col class="w-[128px]"><col class="w-[128px]"><col class="w-[128px]"><col class="w-[128px]"><col class="w-[283px]"><col class="w-[128px]"><col class="w-[128px]"><col class="w-[152px]"></colgroup>
        <thead><tr><th>Order</th><th class="!pr-[9px]">Time <span class="ml-[9px] text-[#888]">/</span></th><th>Type</th><th>Size</th><th>Symbol</th><th>Price</th><th>S / L</th><th>T / P</th><th>Time</th><th>Price</th><th>Swap</th><th>Profit</th></tr></thead>
        <tbody>
          <tr><td><svg class="absolute left-[3px] top-[2px] w-[15px] h-[16px]"><use href="#docb"/></svg>542364327</td><td>2025.12.01 14:29:05</td><td>buy</td><td>0.14</td><td>usdjpy</td><td>155.012</td><td>0.000</td><td>0.000</td><td>2025.12.01 19:13:11</td><td>155.342</td><td>0.00</td><td>29.74</td></tr>
          <tr><td><svg class="absolute left-[3px] top-[2px] w-[15px] h-[16px]"><use href="#docb"/></svg>542364958</td><td>2025.12.01 14:48:17</td><td>buy</td><td>0.15</td><td>usdjpy</td><td>154.890</td><td>0.000</td><td>0.000</td><td>2025.12.01 19:13:13</td><td>155.342</td><td>0.00</td><td>43.65</td></tr>
          <tr><td><svg class="absolute left-[3px] top-[2px] w-[15px] h-[16px]"><use href="#docr"/></svg>542365790</td><td>2025.12.01 15:00:07</td><td>sell</td><td>0.05</td><td>gbpusd</td><td>1.32677</td><td>0.00000</td><td class="!bg-[#5fef5f]">1.32377</td><td>2025.12.01 17:34:42</td><td>1.32377</td><td>0.00</td><td>15.00</td></tr>
          <tr><td><svg class="absolute left-[3px] top-[2px] w-[15px] h-[16px]"><use href="#docb"/></svg>542365829</td><td>2025.12.01 15:00:55</td><td>buy</td><td>0.16</td><td>usdjpy</td><td>154.763</td><td>0.000</td><td>0.000</td><td>2025.12.01 19:13:14</td><td>155.340</td><td>0.00</td><td>59.43</td></tr>
          <tr><td><svg class="absolute left-[3px] top-[2px] w-[15px] h-[16px]"><use href="#docb"/></svg>542381858</td><td>2025.12.01 21:00:02</td><td>buy</td><td>0.05</td><td>gbpusd</td><td>1.32157</td><td>0.00000</td><td>0.00000</td><td>2025.12.03 01:33:49</td><td>1.32164</td><td>-0.35</td><td>0.35</td></tr>
          <tr><td><svg class="absolute left-[3px] top-[2px] w-[15px] h-[16px]"><use href="#docr"/></svg>542381866</td><td>2025.12.01 21:00:02</td><td>sell</td><td>0.05</td><td>usdjpy</td><td>155.491</td><td>0.000</td><td>0.000</td><td>2025.12.03 02:02:05</td><td>155.730</td><td>-1.19</td><td>-7.67</td></tr>
          <tr><td><svg class="absolute left-[3px] top-[2px] w-[15px] h-[16px]"><use href="#docr"/></svg>542387858</td><td>2025.12.02 02:19:18</td><td>sell</td><td>0.06</td><td>usdjpy</td><td>155.611</td><td>0.000</td><td>0.000</td><td>2025.12.03 02:02:06</td><td>155.733</td><td>-0.71</td><td>-4.70</td></tr>
          <tr><td><svg class="absolute left-[3px] top-[2px] w-[15px] h-[16px]"><use href="#docr"/></svg>542389340</td><td>2025.12.02 03:10:48</td><td>sell</td><td>0.07</td><td>usdjpy</td><td>155.731</td><td>0.000</td><td>0.000</td><td>2025.12.03 02:02:07</td><td>155.733</td><td>-0.83</td><td>-0.09</td></tr>
          <tr><td><svg class="absolute left-[3px] top-[2px] w-[15px] h-[16px]"><use href="#docr"/></svg>542398482</td><td>2025.12.02 10:17:28</td><td>sell</td><td>0.08</td><td>usdjpy</td><td>155.855</td><td>0.000</td><td>0.000</td><td>2025.12.03 02:02:09</td><td>155.733</td><td>-0.95</td><td>6.27</td></tr>
          <tr><td><svg class="absolute left-[3px] top-[2px] w-[15px] h-[16px]"><use href="#docr"/></svg>542399837</td><td>2025.12.02 10:57:21</td><td>sell</td><td>0.09</td><td>usdjpy</td><td>155.975</td><td>0.000</td><td>0.000</td><td>2025.12.03 02:02:10</td><td>155.733</td><td>-1.07</td><td>13.99</td></tr>
          <tr><td><svg class="absolute left-[3px] top-[2px] w-[15px] h-[16px]"><use href="#docb"/></svg>542401865</td><td>2025.12.02 11:45:57</td><td>buy</td><td>0.06</td><td>gbpusd</td><td>1.32036</td><td>0.00000</td><td>0.00000</td><td>2025.12.03 01:33:51</td><td>1.32164</td><td>-0.22</td><td>7.68</td></tr>
          <tr><td><svg class="absolute left-[3px] top-[2px] w-[15px] h-[16px]"><use href="#docb"/></svg>542402672</td><td>2025.12.02 12:12:05</td><td>buy</td><td>0.07</td><td>gbpusd</td><td>1.31909</td><td>0.00000</td><td>0.00000</td><td>2025.12.03 01:33:52</td><td>1.32164</td><td>-0.25</td><td>17.85</td></tr>
          <tr><td><svg class="absolute left-[3px] top-[2px] w-[15px] h-[16px]"><use href="#docr"/></svg>542414673</td><td>2025.12.02 17:08:49</td><td>sell</td><td>0.10</td><td>usdjpy</td><td>156.099</td><td>0.000</td><td>0.000</td><td>2025.12.03 02:02:11</td><td>155.722</td><td>-1.19</td><td>24.21</td></tr>
        </tbody>
      </table>
      <div class="flex-1 bg-[#c6c6c6] flex items-center font-bold text-[11.7px] text-[#111] pr-[4px]">
        <div class="ml-[7px] w-[7px] h-[7px] rounded-full bg-[#999] border border-[#777]"></div>
        <span class="ml-[8px]">Profit/Loss: 3 141.03</span>
        <span class="ml-[7px]">Credit: 0.00</span>
        <span class="ml-[7px]">Deposit: 0.00</span>
        <span class="ml-[7px]">Withdrawal: 0.00</span>
        <span class="ml-auto">3 141.03</span>
      </div>
    </div>
    <div class="flex-1 flex flex-col">
      <div class="h-[26px] border-t border-[#a0a0a0] flex items-center justify-center"><svg class="w-[8px] h-[6px]" viewBox="0 0 8 6"><path d="M1 5l3-3 3 3" fill="none" stroke="#555" stroke-width="1.600"/></svg></div>
      <div class="mt-auto h-[58px] w-[18px] bg-[#cdcdcd]"></div>
    </div>
  </div>
</div>

<script>
// [top of wick, bottom of wick, top of body, bottom of body, 1 = black body], keyed by bar index (x = 254 + 8 * index)
const bars = {
0:[530,553,542,551,0],1:[534,553,535,542,0],2:[529,569,534,566,1],3:[565,577,565,575,1],4:[564,585,568,575,0],5:[554,576,564,568,0],6:[529,567,551,565,0],7:[519,558,534,549,0],8:[510,539,518,534,0],9:[498,524,504,519,0],10:[504,547,504,540,1],11:[452,544,487,541,0],12:[435,494,447,487,0],13:[400,466,422,447,0],14:[400,438,410,436,1],15:[400,473,434,463,1],16:[400,465,410,463,0],
19:[400,448,410,428,1],20:[400,429,410,428,0],21:[400,426,410,426,0],22:[400,429,410,428,1],23:[400,433,410,428,0],24:[400,427,410,412,0],31:[400,426,410,412,0],33:[400,419,410,412,0],34:[400,420,410,412,0],36:[400,477,410,465,1],37:[400,481,410,465,0],
53:[309,351,318,348,1],54:[343,367,348,349,1],55:[337,365,347,350,0],56:[343,394,346,391,1],57:[368,391,372,391,0],58:[361,388,366,373,0],59:[353,378,366,375,1],60:[334,375,340,374,0],61:[331,354,339,341,1],62:[326,349,340,343,1],63:[324,348,326,342,0],64:[320,350,326,340,1],65:[338,352,339,350,1],66:[336,350,339,349,0],67:[336,342,338,341,1],68:[334,340,337,339,0],69:[336,362,339,341,1],70:[320,344,325,340,0],71:[319,349,326,343,1],72:[328,379,342,375,1],73:[360,380,371,375,0],74:[352,377,362,370,0],75:[349,368,355,363,0],76:[345,378,356,358,1],77:[354,381,358,371,1],78:[353,391,370,384,1],79:[377,424,383,413,1],80:[384,422,411,418,1],81:[410,457,416,445,1],82:[416,455,419,445,0],83:[405,438,420,425,1],84:[388,435,399,424,0],85:[369,411,371,399,0],86:[303,386,303,370,0],87:[303,347,303,328,1],88:[312,345,317,328,0],89:[311,338,316,321,1],90:[313,324,318,322,0],91:[312,324,318,324,1],92:[317,343,323,339,1],93:[329,364,335,344,0],94:[302,339,322,333,0],95:[304,333,315,322,0],96:[278,325,310,316,0],97:[308,347,310,340,1],98:[332,357,334,339,0],99:[317,341,329,333,0],100:[321,341,329,332,1],101:[327,354,331,337,1],102:[287,339,304,336,0],103:[261,314,286,304,0],104:[256,270,260,285,0],105:[241,270,244,260,0],106:[230,255,243,245,1],107:[181,248,182,243,0],108:[172,210,181,194,1],109:[193,237,193,233,1],110:[206,259,231,241,1],111:[225,264,239,259,1],112:[240,273,258,265,1],113:[256,291,264,291,1],114:[289,305,290,301,1],115:[295,306,297,301,0],116:[293,303,297,300,1],117:[298,323,298,305,1],118:[295,307,301,306,1],
119:[297,315,305,309,1],120:[293,315,298,309,0],121:[289,299,290,298,0],122:[288,299,289,290,1],123:[283,299,289,299,1],124:[292,304,295,299,0],125:[288,311,295,296,1],126:[277,298,288,296,0],127:[277,299,287,294,1],128:[283,319,295,296,1],129:[289,330,295,307,1],130:[287,315,290,305,0],131:[268,304,273,291,0],132:[268,293,272,274,1],133:[257,287,273,274,1],134:[270,346,273,307,1],135:[296,352,307,339,1],136:[302,347,304,339,0],137:[286,309,301,304,0],138:[252,299,264,299,0],139:[249,268,253,263,0],140:[250,263,252,254,1],141:[255,301,258,262,0],142:[239,259,243,254,0],143:[228,243,234,243,0],144:[215,235,217,235,0],145:[211,222,214,217,0],146:[212,216,213,215,1],147:[202,220,204,214,0],148:[197,206,200,204,0],149:[185,204,199,200,1],150:[170,210,199,205,1],151:[191,221,197,203,0],152:[184,209,192,196,0],153:[138,194,147,191,0],154:[133,165,133,147,0],155:[121,143,133,141,1],156:[104,145,131,140,0],157:[129,162,132,142,1],158:[125,166,151,161,0],159:[130,153,151,152,1],160:[123,157,123,150,0]};
let w = '', h = '', s = '';
for (const k in bars) {
  const [hi, lo, top, bot, black] = bars[k];
  const x = 254 + 8 * k;
  w += `M${x + .5} ${hi}V${lo + 1}`;
  if (hi < 418 && lo < 420 && k < 53) continue;
  const box = `M${x - 1.5} ${top + .5}h4V${bot + .5}h-4z`;
  if (black) s += box; else h += box;
}
document.getElementById('wicks').setAttribute('d', w);
document.getElementById('hollow').setAttribute('d', h);
document.getElementById('solid').setAttribute('d', s);
</script>
</body>
</html>
